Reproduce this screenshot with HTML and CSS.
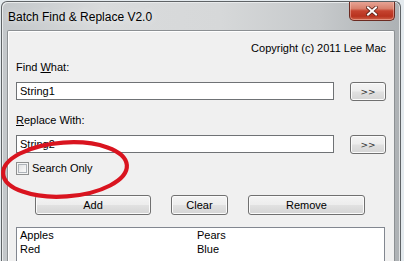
FILE: index.html
```html
<!DOCTYPE html>
<html>
<head>
<meta charset="utf-8">
<link rel="stylesheet" href="styles.css">
</head>
<body>
<div class="window">
  <div class="titlebar">
    <span class="title">Batch Find &amp; Replace V2.0</span>
    <div class="close">
      <svg width="12" height="10" viewBox="0 0 12 10">
        <path d="M2 1.5 L10 8.5 M10 1.5 L2 8.5" stroke="#5a2218" stroke-width="3.6" stroke-linecap="square" fill="none"/>
        <path d="M2 1.5 L10 8.5 M10 1.5 L2 8.5" stroke="#ffffff" stroke-width="2" stroke-linecap="square" fill="none"/>
      </svg>
    </div>
  </div>
  <div class="client">
    <div class="copyright">Copyright (c) 2011 Lee Mac</div>
    <div class="label label-find">Find <u>W</u>hat:</div>
    <div class="row row-find">
      <div class="textbox">String1</div>
      <button class="btn btn-more">&gt;&gt;</button>
    </div>
    <div class="label label-replace"><u>R</u>eplace With:</div>
    <div class="row row-replace">
      <div class="textbox">String2</div>
      <button class="btn btn-more">&gt;&gt;</button>
    </div>
    <div class="check"><span class="box"></span><span>Search Only</span></div>
    <div class="buttons">
      <button class="btn btn-add">Add</button>
      <button class="btn btn-clear">Clear</button>
      <button class="btn btn-remove">Remove</button>
    </div>
    <div class="listbox">
      <span>Apples</span><span>Pears</span>
      <span>Red</span><span>Blue</span>
    </div>
  </div>
</div>
<svg class="annotation" width="404" height="261" viewBox="0 0 404 261">
  <ellipse cx="65" cy="169.5" rx="62" ry="27" transform="rotate(-4 65 169.5)" fill="none" stroke="#d9141f" stroke-width="4.2"/>
</svg>
</body>
</html>
```

FILE: styles.css
```css
html, body {
  margin: 0;
  padding: 0;
}
body {
  width: 404px;
  height: 261px;
  overflow: hidden;
  position: relative;
  background: #e4eaee;
  font-family: "Liberation Sans", Arial, sans-serif;
  font-size: 11px;
  color: #000;
}
.window {
  box-sizing: border-box;
  margin: 1px 0 0 1px;
  width: 400px;
  height: 260px;
  border: 1px solid #5f6366;
  border-bottom: none;
  border-radius: 6px 6px 0 0;
  padding: 0 5px;
  background: linear-gradient(to right, #c3c7ca 0%, #d9dbdc 25%, #d6d8d9 55%, #c6c9cb 80%, #adb1b4 100%);
  box-shadow: inset 1px 1px 0 #e9ebec, inset -1px 0 0 #e0e2e3;
  overflow: hidden;
}
.titlebar {
  height: 28px;
  display: flex;
  align-items: center;
  justify-content: space-between;
  padding-left: 1px;
}
.title {
  font-size: 12px;
  color: #000;
  padding-top: 2px;
  text-shadow: 0 0 6px rgba(255,255,255,0.9);
}
.close {
  align-self: flex-start;
  box-sizing: border-box;
  width: 46px;
  height: 20px;
  margin-top: -1px;
  border: 1px solid #6b2a21;
  border-top: none;
  border-radius: 0 0 5px 5px;
  background: linear-gradient(#e9a99b 0%, #d8806c 40%, #c5432f 52%, #b8331f 80%, #cf6249 100%);
  box-shadow: inset 0 0 0 1px rgba(255,210,200,0.45);
  display: flex;
  align-items: center;
  justify-content: center;
}
.close svg {
  display: block;
  margin-top: 1px;
}
.client {
  box-sizing: border-box;
  height: 232px;
  border: 1px solid #8c9093;
  border-bottom: none;
  border-radius: 2px 2px 0 0;
  background: #f0f0f0;
  padding: 11px 8px 0 8px;
  box-shadow: inset 1px 1px 0 #ffffff;
  overflow: hidden;
}
.copyright {
  text-align: right;
  line-height: 13px;
}
.label {
  line-height: 13px;
}
.label u {
  text-decoration: underline;
  text-underline-offset: 1px;
}
.label-find {
  margin-top: 6px;
}
.label-replace {
  margin-top: 13px;
}
.row {
  display: flex;
  align-items: flex-start;
  justify-content: space-between;
  height: 19px;
  margin-top: 8px;
}
.textbox {
  box-sizing: border-box;
  width: 318px;
  height: 18px;
  border: 1px solid #6f7275;
  background: #fff;
  padding-left: 3px;
  line-height: 16px;
}
.btn {
  box-sizing: border-box;
  font-family: "Liberation Sans", Arial, sans-serif;
  font-size: 11px;
  color: #000;
  border: 1px solid #707070;
  border-radius: 3px;
  background: linear-gradient(#f4f4f4 0%, #ededed 48%, #e1e1e1 52%, #d5d5d5 100%);
  box-shadow: inset 0 0 0 1px #fbfbfb;
  padding: 0;
  margin: 0;
  line-height: 16px;
}
.btn-more {
  width: 36px;
  height: 19px;
  font-size: 10px;
  color: #333;
  font-family: "DejaVu Sans", sans-serif;
  font-size: 9px;
}
.check {
  margin-top: 8px;
  height: 13px;
  display: flex;
  align-items: center;
  line-height: 13px;
}
.box {
  box-sizing: border-box;
  width: 13px;
  height: 13px;
  border: 1px solid #8e8f8f;
  background: linear-gradient(135deg, #d9dadc 0%, #f2f2f2 60%, #fdfdfd 100%);
  box-shadow: inset 0 0 0 1px #f4f4f4, inset 0 0 0 2px #aeb3b9;
  margin-right: 3px;
}
.buttons {
  display: flex;
  gap: 20px;
  margin-top: 20px;
  padding-left: 19px;
}
.buttons .btn {
  height: 20px;
}
.btn-add {
  width: 116px;
}
.btn-clear {
  width: 57px;
}
.btn-remove {
  width: 117px;
}
.listbox {
  box-sizing: border-box;
  margin-top: 12px;
  width: 369px;
  height: 40px;
  border: 1px solid #828790;
  background: #fff;
  display: grid;
  grid-template-columns: 177px auto;
  align-content: start;
  padding-left: 3px;
  line-height: 14px;
}
.annotation {
  position: absolute;
  left: 0;
  top: 0;
  pointer-events: none;
}
```
